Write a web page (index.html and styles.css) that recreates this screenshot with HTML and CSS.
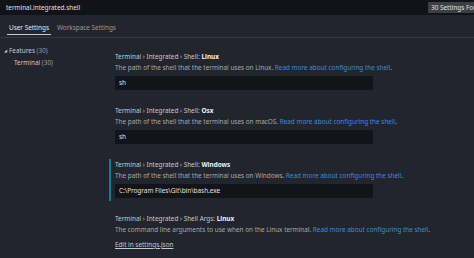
FILE: index.html
```html
<!DOCTYPE html>
<html lang="en">
<head>
    <meta charset="UTF-8">
    <title>Settings</title>
    <link rel="stylesheet" href="styles.css">
</head>
<body>
    <div class="search-bar">
        <span class="search-text">terminal.integrated.shell</span>
        <span class="badge">30 Settings Found</span>
    </div>
    <div class="tabs">
        <span class="tab active">User Settings</span>
        <span class="tab">Workspace Settings</span>
    </div>
    <div class="body">
        <div class="tree">
            <div class="tree-item"><span class="arrow">&#9698;</span>Features <span class="count">(30)</span></div>
            <div class="tree-item child">Terminal <span class="count">(30)</span></div>
        </div>
        <div class="settings">
            <div class="setting">
                <div class="title">Terminal &rsaquo; Integrated &rsaquo; Shell: <b>Linux</b></div>
                <div class="desc">The path of the shell that the terminal uses on Linux. <a>Read more about configuring the shell</a>.</div>
                <div class="input">sh</div>
            </div>
            <div class="setting">
                <div class="title">Terminal &rsaquo; Integrated &rsaquo; Shell: <b>Osx</b></div>
                <div class="desc">The path of the shell that the terminal uses on macOS. <a>Read more about configuring the shell</a>.</div>
                <div class="input">sh</div>
            </div>
            <div class="setting focused">
                <div class="title">Terminal &rsaquo; Integrated &rsaquo; Shell: <b>Windows</b></div>
                <div class="desc">The path of the shell that the terminal uses on Windows. <a>Read more about configuring the shell</a>.</div>
                <div class="input">C:\Program Files\Git\bin\bash.exe</div>
            </div>
            <div class="setting">
                <div class="title">Terminal &rsaquo; Integrated &rsaquo; Shell Args: <b>Linux</b></div>
                <div class="desc">The command line arguments to use when on the Linux terminal. <a>Read more about configuring the shell</a>.</div>
                <div class="edit">Edit in settings.json</div>
            </div>
        </div>
    </div>
</body>
</html>
```

FILE: styles.css
```css
html, body {
    margin: 0;
    height: 100%;
    background-color: #22252d;
    color: #c8c8c8;
    font-family: 'Noto Sans', sans-serif;
    font-size: 6.4px;
    overflow: hidden;
}
.search-bar {
    height: 15px;
    background-color: #111319;
    display: flex;
    align-items: center;
    justify-content: space-between;
    padding-left: 6px;
    white-space: nowrap;
    overflow: hidden;
}
.search-text {
    color: #e0e0e0;
}
.badge {
    background-color: #3c3f47;
    color: #e0e0e0;
    padding: 0 3px;
    height: 11px;
    line-height: 11px;
    margin-right: -14px;
}
.tabs {
    height: 22px;
    display: flex;
    align-items: center;
    gap: 4px;
    padding-left: 7px;
    border-bottom: 1px solid #353842;
}
.tab {
    color: #9a9a9a;
    padding: 5px 2px 2px;
    border-bottom: 1px solid transparent;
}
.tab.active {
    color: #e8e8e8;
    border-bottom-color: #c8c8c8;
}
.body {
    display: flex;
}
.tree {
    width: 109px;
    padding-top: 7px;
}
.tree-item {
    line-height: 12px;
    padding-left: 4px;
    color: #c8c8c8;
}
.tree-item.child {
    padding-left: 14px;
}
.arrow {
    font-size: 4px;
    margin-right: 2px;
    vertical-align: middle;
}
.count {
    color: #9a9a9a;
}
.settings {
    padding-top: 13px;
    flex: 1;
}
.setting {
    border-left: 2px solid transparent;
    padding: 0 0 3px 4px;
    margin-bottom: 12px;
}
.setting.focused {
    border-left-color: #1b7c8c;
}
.title, .desc {
    line-height: 11px;
    white-space: nowrap;
}
.title {
    color: #c8c8c8;
}
.title b {
    color: #f0f0f0;
}
.desc {
    color: #a8a8a8;
}
.desc a {
    color: #3f8ad6;
}
.input {
    margin-top: 3px;
    width: 254px;
    height: 14px;
    line-height: 14px;
    padding-left: 4px;
    background-color: #12141a;
    color: #e0e0e0;
}
.edit {
    margin-top: 5px;
    color: #c8c8c8;
    text-decoration: underline;
}
```
